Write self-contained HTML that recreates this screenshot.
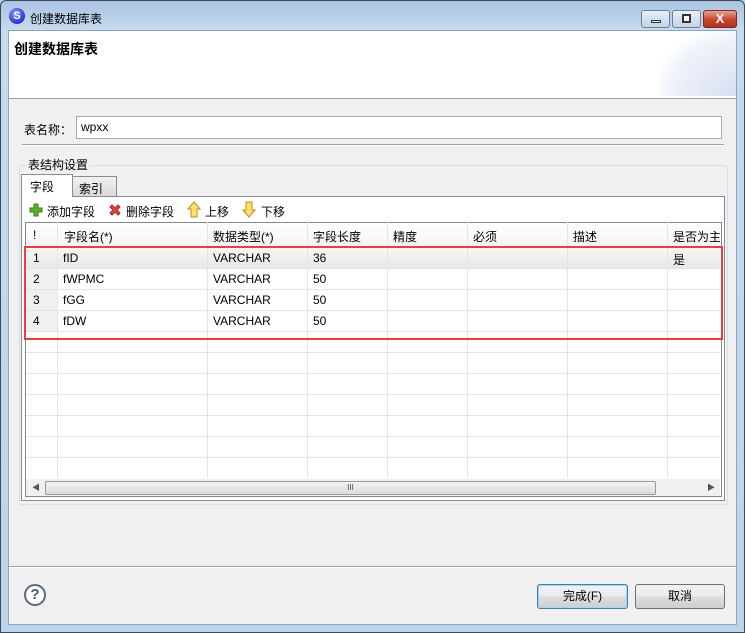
<!DOCTYPE html>
<html><head><meta charset="utf-8"><style>
*{box-sizing:border-box;margin:0;padding:0}
body{width:745px;height:633px;position:relative;overflow:hidden;background:#b9d1ea;font-family:"Liberation Sans","Noto Sans CJK SC",sans-serif;font-size:12px;color:#000}
.a{position:absolute}
.win{left:0;top:0;width:745px;height:633px;border:1px solid #3a4a5c;border-radius:6px 6px 0 0;background:linear-gradient(#a9c3e0,#c7dbf0 30px,#bcd3ea)}
.client{left:8px;top:30px;width:729px;height:595px;background:#f0f0f0;border:1px solid #8ea5c0}
.btn{border:1px solid #707070;border-radius:3px;background:linear-gradient(#f2f2f2,#ebebeb 50%,#dddddd 51%,#cfcfcf);text-align:center;line-height:22px}
.col{top:222px;width:1px;height:256px;background:#e4e4e4}
.row{left:26px;width:694px;height:1px;background:#e4e4e4}
</style></head><body>
<div class="a win"></div>
<div class="a" style="left:9px;top:8px;width:16px;height:16px;border-radius:50%;background:radial-gradient(circle at 40% 35%,#8fa0ff,#2a2fcf 70%);color:#fff;font-size:11px;font-weight:bold;text-align:center;line-height:16px">S</div>
<div class="a" style="left:30px;top:10px;">创建数据库表</div>
<div class="a btn" style="left:641px;top:10px;width:29px;height:18px;border-color:#6d7f99;background:linear-gradient(#e9f0f8,#c3d3e6)"><div class="a" style="left:9px;top:9px;width:10px;height:3px;border:1px solid #333;background:#fff"></div></div>
<div class="a btn" style="left:672px;top:10px;width:29px;height:18px;border-color:#6d7f99;background:linear-gradient(#e9f0f8,#c3d3e6)"><div class="a" style="left:9px;top:3px;width:9px;height:9px;border:2px solid #333;background:#fff"></div></div>
<div class="a btn" style="left:703px;top:10px;width:34px;height:18px;border-color:#7a2a1e;background:linear-gradient(#e9a08e,#c8452e 55%,#b4321e);color:#fff;font-weight:bold;line-height:16px;font-size:13px">X</div>
<div class="a client"></div>
<div class="a" style="left:9px;top:31px;width:727px;height:68px;background:#fff;border-bottom:1px solid #a0a0a0"></div>
<div class="a" style="left:660px;top:31px;width:76px;height:65px;background:radial-gradient(ellipse at 100% 100%,#d7dff0,#eef2fa 60%,#fff 80%)"></div>
<div class="a" style="left:14px;top:39px;font-size:14px;font-weight:bold">创建数据库表</div>
<div class="a" style="left:24px;top:121px">表名称：</div>
<div class="a" style="left:76px;top:116px;width:646px;height:23px;background:#fff;border:1px solid #abadb3;padding:3px 0 0 4px">wpxx</div>
<div class="a" style="left:22px;top:144px;width:702px;height:2px;border-top:1px solid #a0a0a0;border-bottom:1px solid #fff"></div>
<div class="a" style="left:19px;top:165px;width:709px;height:340px;border:1px solid #d5dfe5;border-radius:3px"></div>
<div class="a" style="left:26px;top:156px;background:#f0f0f0;padding:0 2px">表结构设置</div>
<div class="a" style="left:21px;top:196px;width:704px;height:305px;border:1px solid #898c95;background:#fff"></div>
<div class="a" style="left:72px;top:176px;width:45px;height:21px;border:1px solid #898c95;background:linear-gradient(#f2f2f2,#d9d9d9);padding:3px 0 0 6px">索引</div>
<div class="a" style="left:21px;top:174px;width:52px;height:23px;border:1px solid #898c95;border-bottom:none;background:#fff;padding:3px 0 0 8px">字段</div>
<svg class="a" style="left:29px;top:203px" width="14" height="14"><path d="M5 1h4v4h4v4H9v4H5V9H1V5h4z" fill="#5cb030" stroke="#3a7a1a" stroke-width="1"/></svg>
<div class="a" style="left:47px;top:203px">添加字段</div>
<svg class="a" style="left:108px;top:203px" width="14" height="14"><path d="M2 4l2-2 3 3 3-3 2 2-3 3 3 3-2 2-3-3-3 3-2-2 3-3z" fill="#e04848" stroke="#b02020" stroke-width="1"/></svg>
<div class="a" style="left:126px;top:203px">删除字段</div>
<svg class="a" style="left:187px;top:201px" width="14" height="17"><path d="M7 1L1 8h3v8h6V8h3z" fill="#ffe070" stroke="#c08a10" stroke-width="1"/></svg>
<div class="a" style="left:205px;top:203px">上移</div>
<svg class="a" style="left:242px;top:201px" width="14" height="17"><path d="M7 16L1 9h3V1h6v8h3z" fill="#ffe070" stroke="#c08a10" stroke-width="1"/></svg>
<div class="a" style="left:261px;top:203px">下移</div>
<div class="a" style="left:25px;top:222px;width:697px;height:275px;border:1px solid #828790;background:#fff"></div>
<div class="a" style="left:26px;top:223px;width:694px;height:23px;background:linear-gradient(#fff,#f3f4f6)"></div>
<div class="a" style="left:26px;top:247px;width:694px;height:21px;background:linear-gradient(#f7f7f7,#e8e8e8)"></div>
<div class="a" style="left:26px;top:268px;width:31px;height:63px;background:#f0f0f0"></div>
<div class="a row" style="top:246px"></div><div class="a row" style="top:268px"></div><div class="a row" style="top:289px"></div><div class="a row" style="top:310px"></div><div class="a row" style="top:331px"></div><div class="a row" style="top:352px"></div><div class="a row" style="top:373px"></div><div class="a row" style="top:394px"></div><div class="a row" style="top:415px"></div><div class="a row" style="top:436px"></div><div class="a row" style="top:457px"></div>
<div class="a col" style="left:57px"></div><div class="a col" style="left:207px"></div><div class="a col" style="left:307px"></div><div class="a col" style="left:387px"></div><div class="a col" style="left:467px"></div><div class="a col" style="left:567px"></div><div class="a col" style="left:667px"></div>
<div class="a" style="left:33px;top:228px">!</div>
<div class="a" style="left:64px;top:228px">字段名(*)</div>
<div class="a" style="left:213px;top:228px">数据类型(*)</div>
<div class="a" style="left:313px;top:228px">字段长度</div>
<div class="a" style="left:393px;top:228px">精度</div>
<div class="a" style="left:473px;top:228px">必须</div>
<div class="a" style="left:573px;top:228px">描述</div>
<div class="a" style="left:673px;top:228px;width:47px;overflow:hidden;white-space:nowrap">是否为主键</div>
<div class="a" style="left:33px;top:251px">1</div><div class="a" style="left:63px;top:251px">fID</div><div class="a" style="left:213px;top:251px">VARCHAR</div><div class="a" style="left:313px;top:251px">36</div><div class="a" style="left:673px;top:251px">是</div>
<div class="a" style="left:33px;top:272px">2</div><div class="a" style="left:63px;top:272px">fWPMC</div><div class="a" style="left:213px;top:272px">VARCHAR</div><div class="a" style="left:313px;top:272px">50</div>
<div class="a" style="left:33px;top:293px">3</div><div class="a" style="left:63px;top:293px">fGG</div><div class="a" style="left:213px;top:293px">VARCHAR</div><div class="a" style="left:313px;top:293px">50</div>
<div class="a" style="left:33px;top:314px">4</div><div class="a" style="left:63px;top:314px">fDW</div><div class="a" style="left:213px;top:314px">VARCHAR</div><div class="a" style="left:313px;top:314px">50</div>
<div class="a" style="left:24px;top:246px;width:699px;height:94px;border:2px solid #ee3b3b"></div>
<div class="a" style="left:26px;top:479px;width:694px;height:17px;background:#f0f0f0"></div>
<div class="a" style="left:32px;top:482px;font-size:8px;color:#555">◀</div>
<div class="a" style="left:707px;top:482px;font-size:8px;color:#555">▶</div>
<div class="a" style="left:45px;top:481px;width:611px;height:14px;border:1px solid #999;border-radius:2px;background:linear-gradient(#f3f3f3,#dcdcdc);text-align:center;font-size:8px;line-height:12px;color:#444">III</div>
<div class="a" style="left:9px;top:566px;width:727px;height:2px;border-top:1px solid #a0a0a0;border-bottom:1px solid #fff"></div>
<div class="a" style="left:24px;top:584px;width:22px;height:22px;border:2px solid #5a6a80;border-radius:50%;text-align:center;font-weight:bold;font-size:15px;line-height:18px;color:#4a5a70;background:#fff">?</div>
<div class="a btn" style="left:537px;top:584px;width:91px;height:25px;border-color:#3c7fb1;box-shadow:inset 0 0 0 1px #9ad8f5">完成(F)</div>
<div class="a btn" style="left:635px;top:584px;width:90px;height:25px">取消</div>
</body></html>
